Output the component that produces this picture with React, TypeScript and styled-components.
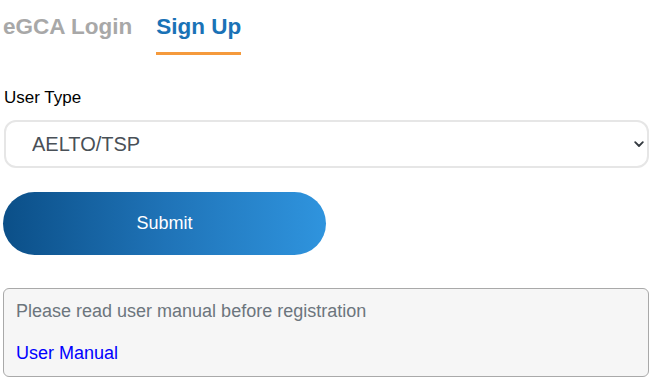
import React, { useState } from 'react';
import styled, { createGlobalStyle } from 'styled-components';

const GlobalStyle = createGlobalStyle`
  html, body {
    margin: 0;
    padding: 0;
    background: #fff;
    font-family: "Liberation Sans", Arial, sans-serif;
  }
`;

export default function App() {
  const [tab, setTab] = useState<'login' | 'signup'>('signup');
  const [userType, setUserType] = useState('AELTO/TSP');

  return (
    <>
      <GlobalStyle />
      <Page>
        <Tabs>
          <Tab active={tab === 'login'} onClick={() => setTab('login')}>eGCA Login</Tab>
          <Tab active={tab === 'signup'} onClick={() => setTab('signup')}>Sign Up</Tab>
        </Tabs>

        <Field>
          <Label htmlFor="userType">User Type</Label>
          <SelectWrap>
            <Select id="userType" value={userType} onChange={e => setUserType(e.target.value)}>
              <option>AELTO/TSP</option>
              <option>Individual</option>
              <option>Organisation</option>
            </Select>
            <Chevron width="10" height="7" viewBox="0 0 10 7">
              <path d="M1.2 1.2 L5 5 L8.8 1.2" fill="none" stroke="#343a40" strokeWidth="1.8" strokeLinecap="round" strokeLinejoin="round" />
            </Chevron>
          </SelectWrap>
        </Field>

        <SubmitButton type="button">Submit</SubmitButton>

        <InfoBox>
          <InfoText>Please read user manual before registration</InfoText>
          <ManualLink href="#">User Manual</ManualLink>
        </InfoBox>
      </Page>
    </>
  );
}

const Page = styled.div`
  width: 659px;
  padding: 0 10px 0 3px;
  box-sizing: border-box;
`;

const Tabs = styled.div`
  display: flex;
  gap: 24px;
  height: 55px;
`;

const Tab = styled.div<{ active: boolean }>`
  font-size: 22.5px;
  font-weight: 700;
  color: ${p => (p.active ? '#1a72b6' : '#a8a8a8')};
  padding-top: 14px;
  box-sizing: border-box;
  height: 55px;
  border-bottom: 3px solid ${p => (p.active ? '#f59a3c' : 'transparent')};
  cursor: pointer;
`;

const Field = styled.div`
  margin-top: 33px;
  padding-left: 1px;
`;

const Label = styled.label`
  display: block;
  font-size: 17px;
  color: #000;
  line-height: 20px;
`;

const SelectWrap = styled.div`
  position: relative;
  margin-top: 12px;
`;

const Select = styled.select`
  appearance: none;
  width: 645px;
  height: 48px;
  box-sizing: border-box;
  border: 2px solid #e6e6e6;
  border-radius: 12px;
  background: #fff;
  padding: 0 40px 0 26px;
  font-family: "Liberation Sans", Arial, sans-serif;
  font-size: 20px;
  color: #495057;
  outline: none;
`;

const Chevron = styled.svg`
  position: absolute;
  left: 630px;
  top: 21px;
  pointer-events: none;
`;

const SubmitButton = styled.button`
  display: block;
  margin-top: 24px;
  width: 323px;
  height: 63px;
  border: none;
  border-radius: 32px;
  background: linear-gradient(90deg, #0b4f88 0%, #1f73b7 50%, #2f94de 100%);
  color: #fff;
  font-family: "Liberation Sans", Arial, sans-serif;
  font-size: 18px;
  cursor: pointer;
`;

const InfoBox = styled.div`
  margin-top: 33px;
  width: 646px;
  height: 89px;
  box-sizing: border-box;
  border: 1px solid #a9a9a9;
  border-radius: 6px;
  background: #f6f6f6;
  padding: 12px 12px 0 12px;
  display: flex;
  flex-direction: column;
  align-items: flex-start;
  gap: 21px;
`;

const InfoText = styled.div`
  font-size: 18px;
  color: #6c757d;
  line-height: 21px;
`;

const ManualLink = styled.a`
  font-size: 18px;
  color: #0000ff;
  text-decoration: none;
  line-height: 21px;
`;
